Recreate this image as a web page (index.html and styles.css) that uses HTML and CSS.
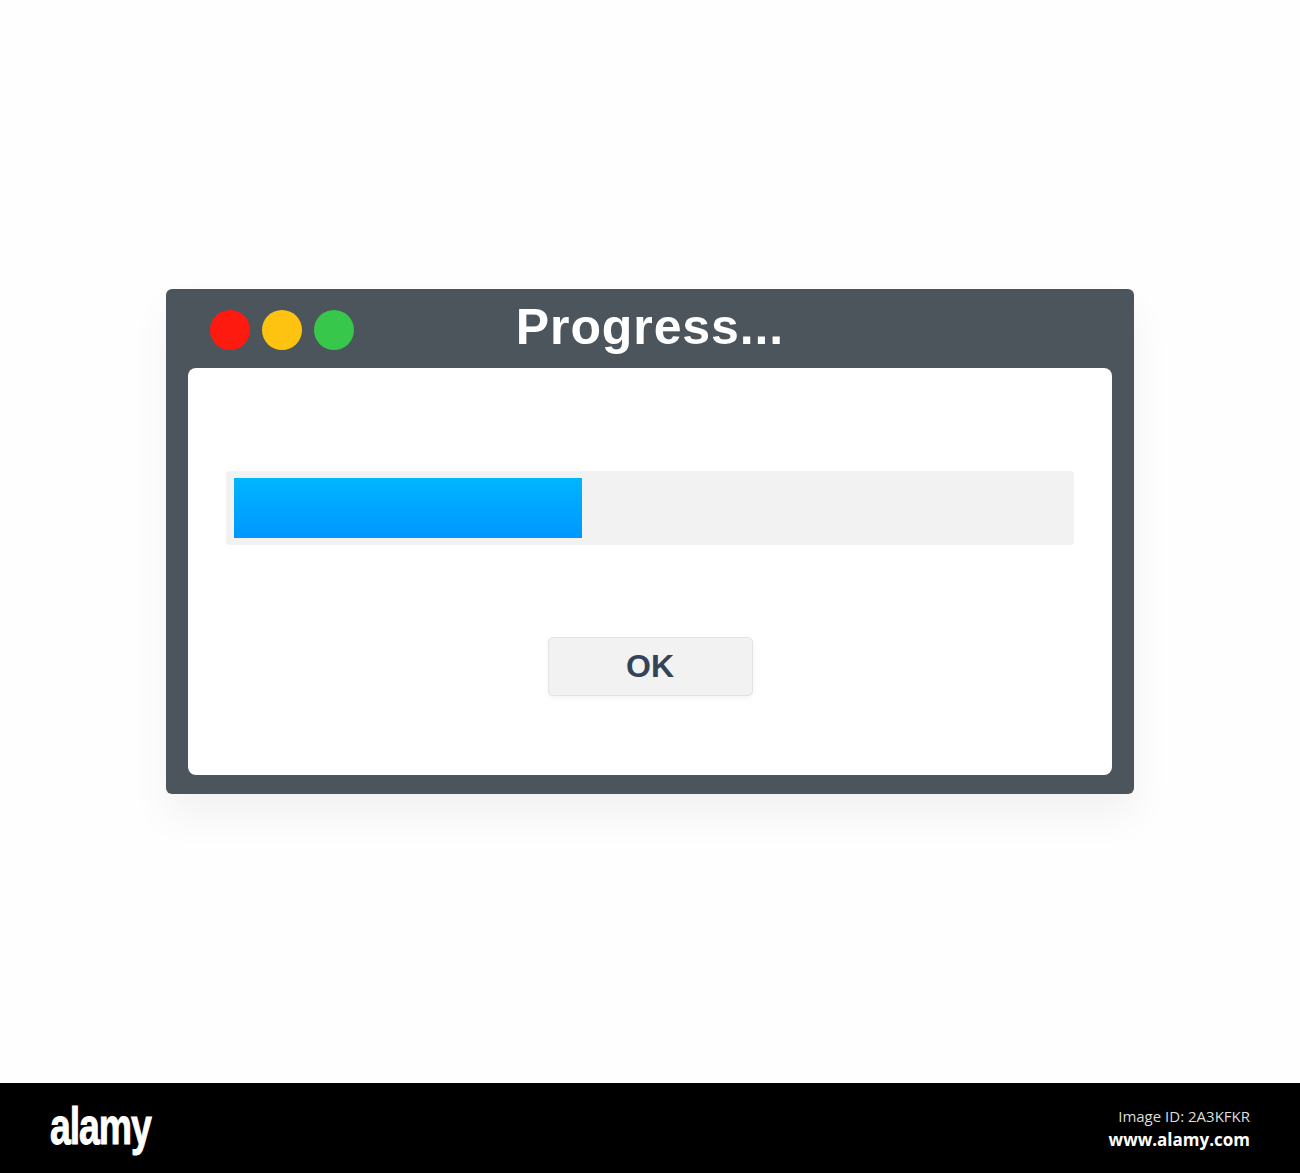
FILE: index.html
```html
<!DOCTYPE html>
<html lang="en">
<head>
  <meta charset="UTF-8">
  <meta name="viewport" content="width=device-width, initial-scale=1.0">
  <title>Progress</title>
  <link rel="stylesheet" href="styles.css">
</head>
<body>

  <main class="stage">
    <div class="window">
      <div class="titlebar">
        <div class="controls">
          <span class="dot dot-close"></span>
          <span class="dot dot-min"></span>
          <span class="dot dot-max"></span>
        </div>
        <h1 class="title">Progress...</h1>
        <div></div>
      </div>

      <div class="panel">
        <div class="track">
          <div class="fill" style="width: 41.8%"></div>
        </div>
        <button class="ok-btn">OK</button>
      </div>
    </div>
  </main>

  <footer class="stock-bar">
    <div class="brand">alamy</div>
    <div class="stock-info">
      <div class="image-id">Image ID: 2A3KFKR</div>
      <div class="site">www.alamy.com</div>
    </div>
  </footer>

</body>
</html>
```

FILE: styles.css
```css
body {
  margin: 0;
  padding: 0;
  background-color: #fefefe;
  font-family: "Liberation Sans", Arial, sans-serif;
}
.stage {
  height: 1083px;
  box-sizing: border-box;
  padding-top: 289px;
  display: flex;
  justify-content: center;
  align-items: flex-start;
}
.window {
  width: 968px;
  height: 505px;
  box-sizing: border-box;
  background-color: #4c555c;
  border-radius: 6px;
  padding: 0 22px 19px;
  display: flex;
  flex-direction: column;
  box-shadow: 0 22px 40px rgba(0, 0, 0, 0.05);
}
.titlebar {
  height: 79px;
  display: grid;
  grid-template-columns: 1fr auto 1fr;
  align-items: center;
}
.controls {
  display: flex;
  gap: 12px;
  padding-left: 22px;
  padding-top: 2px;
}
.dot {
  width: 40px;
  height: 40px;
  border-radius: 50%;
}
.dot-close { background-color: #fe1a0f; }
.dot-min { background-color: #fec310; }
.dot-max { background-color: #36c74b; }
.title {
  margin: 0;
  color: #fff;
  font-size: 50px;
  font-weight: bold;
  line-height: 1;
  letter-spacing: 0.9px;
  padding-bottom: 4px;
}
.panel {
  flex: 1;
  background-color: #fff;
  border-radius: 8px;
  padding: 103px 38px 0;
  display: flex;
  flex-direction: column;
  align-items: center;
}
.track {
  align-self: stretch;
  height: 74px;
  box-sizing: border-box;
  padding: 7px 8px;
  background-color: #f2f2f2;
  border-radius: 4px;
}
.fill {
  height: 60px;
  background: linear-gradient(to bottom, #00b6ff, #0096ff);
}
.ok-btn {
  margin-top: 92px;
  width: 205px;
  height: 59px;
  background-color: #f2f2f2;
  border: 1px solid #e3e3e3;
  border-radius: 5px;
  box-shadow: 0 2px 4px rgba(0, 0, 0, 0.05);
  color: #33435a;
  font-family: "Liberation Sans", Arial, sans-serif;
  font-size: 32px;
  font-weight: bold;
  cursor: pointer;
}
.stock-bar {
  height: 90px;
  background-color: #000;
  display: flex;
  justify-content: space-between;
  align-items: center;
  padding: 0 50px;
}
.brand {
  color: #fff;
  font-family: "Liberation Sans", Arial, sans-serif;
  font-weight: bold;
  font-size: 52px;
  letter-spacing: -1.5px;
  transform: scaleX(0.72);
  transform-origin: left center;
  margin-top: -4px;
  -webkit-text-stroke: 1px #fff;
}
.stock-info {
  text-align: right;
  font-family: "Open Sans", sans-serif;
  color: #fff;
}
.image-id {
  font-size: 15px;
  color: #ddd;
}
.site {
  font-size: 17px;
  font-weight: bold;
  margin-top: 2px;
}
```
